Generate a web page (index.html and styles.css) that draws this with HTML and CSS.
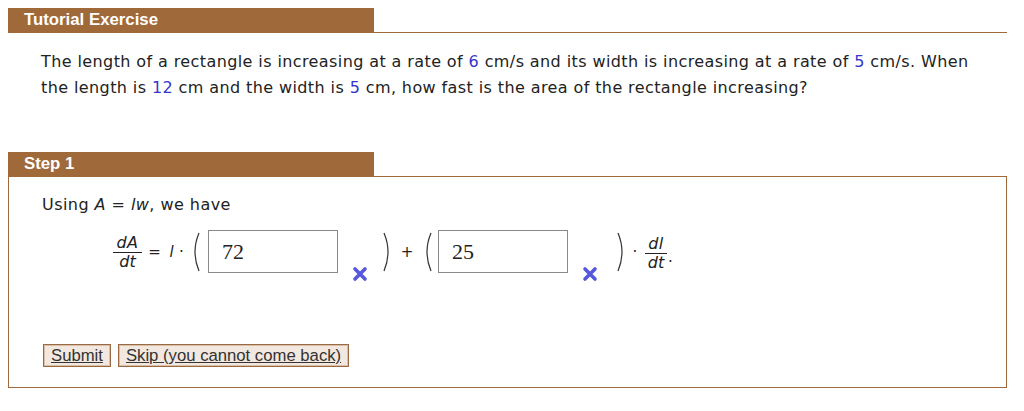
FILE: index.html
```html
<!DOCTYPE html>
<html>
<head>
<meta charset="utf-8">
<link rel="stylesheet" href="styles.css">
</head>
<body>
<div class="section-head"><div class="bar">Tutorial Exercise</div></div>
<p class="question">The length of a rectangle is increasing at a rate of <span class="num">6</span> cm/s and its width is increasing at a rate of <span class="num">5</span> cm/s. When<br>the length is <span class="num">12</span> cm and the width is <span class="num">5</span> cm, how fast is the area of the rectangle increasing?</p>

<div class="step">
  <div class="step-head"><div class="bar">Step 1</div></div>
  <div class="step-box">
    <p class="using">Using <i>A</i> = <i>lw</i>, we have</p>
    <div class="eq">
      <span class="frac f1"><span class="n">dA</span><span class="d">dt</span></span>
      <span class="op eqsign">=</span>
      <span class="op ell"><i>l</i></span>
      <span class="op dot">·</span>
      <svg class="paren" width="16" height="42" viewBox="0 0 16 42"><path d="M13 2 Q5 21 13 40" fill="none" stroke="#333" stroke-width="1.2"/></svg>
      <span class="group g1">
        <span class="input">72</span>
        <svg class="xmark" width="16" height="16" viewBox="0 0 16 16"><path d="M3 3 L13 13 M13 3 L3 13" stroke="#5557dc" stroke-width="3.6" stroke-linecap="round"/></svg>
      </span>
      <svg class="paren close c1" width="16" height="42" viewBox="0 0 16 42"><path d="M6 2 Q14 21 6 40" fill="none" stroke="#333" stroke-width="1.2"/></svg>
      <span class="op plus">+</span>
      <svg class="paren" width="16" height="42" viewBox="0 0 16 42"><path d="M13 2 Q5 21 13 40" fill="none" stroke="#333" stroke-width="1.2"/></svg>
      <span class="group g2">
        <span class="input">25</span>
        <svg class="xmark" width="16" height="16" viewBox="0 0 16 16"><path d="M3 3 L13 13 M13 3 L3 13" stroke="#5557dc" stroke-width="3.6" stroke-linecap="round"/></svg>
      </span>
      <svg class="paren close c2" width="16" height="42" viewBox="0 0 16 42"><path d="M6 2 Q14 21 6 40" fill="none" stroke="#333" stroke-width="1.2"/></svg>
      <span class="op dot2">·</span>
      <span class="frac f2"><span class="n">dl</span><span class="d">dt</span></span><span class="op period">.</span>
    </div>
    <div class="buttons">
      <span class="btn">Submit</span>
      <span class="btn">Skip (you cannot come back)</span>
    </div>
  </div>
</div>
</body>
</html>
```

FILE: styles.css
```css
body {
  margin: 8px;
  background: #fff;
  color: #222;
  font-family: "DejaVu Sans", Verdana, sans-serif;
  font-size: 16px;
}
.section-head {
  width: 999px;
  border-bottom: 1px solid #a0693a;
}
.bar {
  width: 350px;
  height: 24px;
  padding-left: 16px;
  background: #a0693a;
  color: #fff;
  font-family: "Liberation Sans", Arial, sans-serif;
  font-weight: bold;
  font-size: 16.8px;
  line-height: 24px;
}
.question {
  margin: 16px 0 0 0;
  padding-left: 33px;
  line-height: 26px;
  font-size: 16px;
  letter-spacing: 0.4px;
}
.num { color: #3535cc; }
.step { margin-top: 51px; width: 999px; }
.step-box {
  border: 1px solid #a0693a;
  padding: 18px 0 20px 33px;
}
.using {
  margin: 0;
  line-height: 20px;
  font-size: 16px;
  letter-spacing: 0.45px;
}
.eq {
  margin-top: 15px;
  display: flex;
  align-items: center;
  padding-left: 70px;
  height: 43px;
}
.frac {
  display: inline-flex;
  flex-direction: column;
  align-items: center;
  font-style: italic;
  font-size: 16px;
  line-height: 17px;
}
.frac .n { border-bottom: 1px solid #222; padding: 0 3px 1px; letter-spacing: 0.5px; }
.f1 { width: 31px; }
.f2 { width: 28px; margin-top: 3px; }
.op {
  display: inline-block;
  text-align: center;
  font-size: 15px;
}
.eqsign { width: 23px; }
.ell { width: 11px; }
.dot { width: 9px; }
.g1 { margin-left: 6px; }
.g2 { margin-left: 4px; }
.c1 { margin-left: 10px; }
.c2 { margin-left: 14px; }
.plus { width: 22px; margin-left: 2px; }
.dot2 { width: 14px; }
.group {
  display: inline-flex;
  align-items: flex-end;
  height: 43px;
}
.input {
  box-sizing: border-box;
  width: 130px;
  height: 43px;
  border: 1px solid #8a8a8a;
  font-family: "Liberation Serif", "Times New Roman", serif;
  font-size: 22px;
  line-height: 41px;
  padding-left: 13px;
  color: #222;
}
.xmark {
  margin-left: 14px;
  margin-bottom: -9px;
}
.period { font-size: 15px; margin-top: 10px; margin-left: -2px; }
.buttons {
  margin-top: 71px;
  display: flex;
  gap: 7px;
  padding-left: 1px;
}
.btn {
  box-sizing: border-box;
  height: 23px;
  padding: 0 7px;
  background: #f2e8df;
  border: 1px solid #9a6a45;
  box-shadow: inset 0 0 0 1px #d8bfa8;
  font-family: "Liberation Sans", Arial, sans-serif;
  font-size: 16.7px;
  line-height: 21px;
  color: #333;
  text-decoration: underline;
}
```
